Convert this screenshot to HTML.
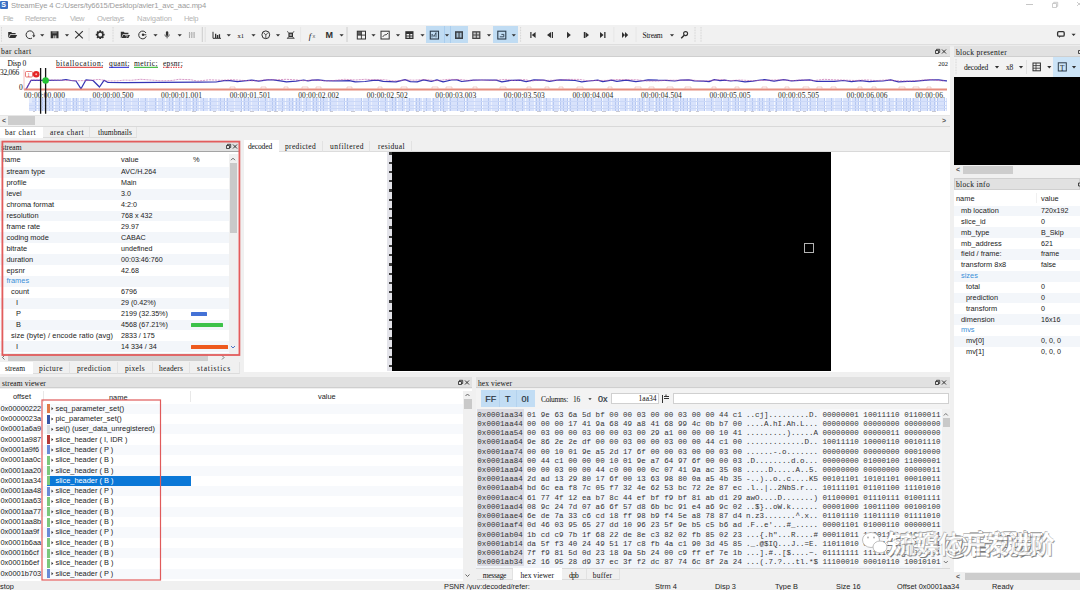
<!DOCTYPE html>
<html>
<head>
<meta charset="utf-8">
<title>StreamEye 4</title>
<style>
html,body{margin:0;padding:0;}
body{width:1080px;height:590px;overflow:hidden;background:#f0f0f0;}
#app{position:relative;width:1080px;height:590px;overflow:hidden;background:#f0f0f0;font-family:"Liberation Sans",sans-serif;}
#app div{position:absolute;box-sizing:border-box;}
.t{position:absolute;white-space:pre;line-height:12px;height:12px;color:#222;}
.s{font-family:"Liberation Sans",sans-serif;font-size:7.4px;}
.p{font-family:"Liberation Serif",serif;font-size:7.5px;color:#101010;margin-top:1px;}
.m{font-family:"Liberation Mono",monospace;font-size:7.5px;color:#333;}
svg{position:absolute;left:0;top:0;}
</style>
</head>
<body>
<div id="app">
<div style="left:0px;top:0px;width:1080px;height:25px;background:#ffffff;"></div>
<div style="left:0px;top:1px;width:8px;height:8px;background:#3b6fc4;border-radius:1px;"></div>
<div style="left:0px;top:25px;width:1080px;height:20px;background:#f1f1f1;border-bottom:1px solid #dedede;"></div>
<div style="left:0px;top:45px;width:1080px;height:2px;background:#ececec;"></div>
<div style="left:0px;top:46px;width:950px;height:11px;background:#e1e1e1;border-bottom:1px solid #cfcfcf;"></div>
<div style="left:0px;top:57px;width:950px;height:58px;background:#ffffff;"></div>
<div style="left:0px;top:115px;width:950px;height:11px;background:#f0f0f0;border-top:1px solid #e6e6e6;"></div>
<div style="left:8px;top:116px;width:27px;height:9px;background:#cdcdcd;"></div>
<div style="left:0px;top:126px;width:950px;height:1px;background:#d9d9d9;"></div>
<div style="left:0px;top:127px;width:43px;height:11px;background:#ffffff;"></div>
<div style="left:43px;top:127px;width:47px;height:11px;background:#f0f0f0;border-right:1px solid #e2e2e2;border-bottom:1px solid #dcdcdc;"></div>
<div style="left:90px;top:127px;width:47px;height:11px;background:#f0f0f0;border-right:1px solid #e2e2e2;border-bottom:1px solid #dcdcdc;"></div>
<div style="left:29px;top:97.8px;width:918px;height:13.2px;background:repeating-linear-gradient(90deg,rgba(255,255,255,0) 0,rgba(255,255,255,0) 7.6px,rgba(255,255,255,0.75) 7.6px,rgba(255,255,255,0.75) 8.57px),repeating-linear-gradient(90deg,#d8e2fb 0,#d8e2fb 2.8px,#b6c8f2 2.8px,#b6c8f2 3.43px);"></div>
<div style="left:29px;top:101px;width:918px;height:0.7px;background:#cbd8f7;"></div>
<div style="left:29px;top:104.5px;width:918px;height:0.7px;background:#cbd8f7;"></div>
<div style="left:29px;top:108px;width:918px;height:0.7px;background:#cbd8f7;"></div>
<div style="left:29px;top:97.5px;width:3px;height:5px;background:#e4ebfb;"></div>
<div style="left:33px;top:111.3px;width:2px;height:0.9px;background:#c9c9d2;"></div>
<div style="left:54px;top:111.3px;width:4px;height:0.9px;background:#c9c9d2;"></div>
<div style="left:64px;top:111.3px;width:3px;height:0.9px;background:#c9c9d2;"></div>
<div style="left:85px;top:111.3px;width:3px;height:0.9px;background:#c9c9d2;"></div>
<div style="left:106px;top:111.3px;width:2px;height:0.9px;background:#c9c9d2;"></div>
<div style="left:127px;top:111.3px;width:2px;height:0.9px;background:#c9c9d2;"></div>
<div style="left:144px;top:111.3px;width:3px;height:0.9px;background:#c9c9d2;"></div>
<div style="left:165px;top:111.3px;width:2px;height:0.9px;background:#c9c9d2;"></div>
<div style="left:175px;top:111.3px;width:4px;height:0.9px;background:#c9c9d2;"></div>
<div style="left:192px;top:111.3px;width:4px;height:0.9px;background:#c9c9d2;"></div>
<div style="left:213px;top:111.3px;width:3px;height:0.9px;background:#c9c9d2;"></div>
<div style="left:230px;top:111.3px;width:4px;height:0.9px;background:#c9c9d2;"></div>
<div style="left:240px;top:111.3px;width:2px;height:0.9px;background:#c9c9d2;"></div>
<div style="left:250px;top:111.3px;width:4px;height:0.9px;background:#c9c9d2;"></div>
<div style="left:267px;top:111.3px;width:4px;height:0.9px;background:#c9c9d2;"></div>
<div style="left:274px;top:111.3px;width:4px;height:0.9px;background:#c9c9d2;"></div>
<div style="left:281px;top:111.3px;width:2px;height:0.9px;background:#c9c9d2;"></div>
<div style="left:302px;top:111.3px;width:2px;height:0.9px;background:#c9c9d2;"></div>
<div style="left:316px;top:111.3px;width:2px;height:0.9px;background:#c9c9d2;"></div>
<div style="left:330px;top:111.3px;width:3px;height:0.9px;background:#c9c9d2;"></div>
<div style="left:351px;top:111.3px;width:4px;height:0.9px;background:#c9c9d2;"></div>
<div style="left:368px;top:111.3px;width:4px;height:0.9px;background:#c9c9d2;"></div>
<div style="left:385px;top:111.3px;width:3px;height:0.9px;background:#c9c9d2;"></div>
<div style="left:406px;top:111.3px;width:3px;height:0.9px;background:#c9c9d2;"></div>
<div style="left:416px;top:111.3px;width:3px;height:0.9px;background:#c9c9d2;"></div>
<div style="left:423px;top:111.3px;width:2px;height:0.9px;background:#c9c9d2;"></div>
<div style="left:433px;top:111.3px;width:3px;height:0.9px;background:#c9c9d2;"></div>
<div style="left:443px;top:111.3px;width:3px;height:0.9px;background:#c9c9d2;"></div>
<div style="left:460px;top:111.3px;width:4px;height:0.9px;background:#c9c9d2;"></div>
<div style="left:474px;top:111.3px;width:3px;height:0.9px;background:#c9c9d2;"></div>
<div style="left:495px;top:111.3px;width:3px;height:0.9px;background:#c9c9d2;"></div>
<div style="left:516px;top:111.3px;width:3px;height:0.9px;background:#c9c9d2;"></div>
<div style="left:537px;top:111.3px;width:4px;height:0.9px;background:#c9c9d2;"></div>
<div style="left:554px;top:111.3px;width:4px;height:0.9px;background:#c9c9d2;"></div>
<div style="left:564px;top:111.3px;width:3px;height:0.9px;background:#c9c9d2;"></div>
<div style="left:571px;top:111.3px;width:3px;height:0.9px;background:#c9c9d2;"></div>
<div style="left:592px;top:111.3px;width:4px;height:0.9px;background:#c9c9d2;"></div>
<div style="left:602px;top:111.3px;width:4px;height:0.9px;background:#c9c9d2;"></div>
<div style="left:616px;top:111.3px;width:4px;height:0.9px;background:#c9c9d2;"></div>
<div style="left:637px;top:111.3px;width:4px;height:0.9px;background:#c9c9d2;"></div>
<div style="left:644px;top:111.3px;width:4px;height:0.9px;background:#c9c9d2;"></div>
<div style="left:654px;top:111.3px;width:4px;height:0.9px;background:#c9c9d2;"></div>
<div style="left:675px;top:111.3px;width:3px;height:0.9px;background:#c9c9d2;"></div>
<div style="left:689px;top:111.3px;width:2px;height:0.9px;background:#c9c9d2;"></div>
<div style="left:696px;top:111.3px;width:3px;height:0.9px;background:#c9c9d2;"></div>
<div style="left:713px;top:111.3px;width:2px;height:0.9px;background:#c9c9d2;"></div>
<div style="left:727px;top:111.3px;width:2px;height:0.9px;background:#c9c9d2;"></div>
<div style="left:744px;top:111.3px;width:2px;height:0.9px;background:#c9c9d2;"></div>
<div style="left:751px;top:111.3px;width:3px;height:0.9px;background:#c9c9d2;"></div>
<div style="left:768px;top:111.3px;width:3px;height:0.9px;background:#c9c9d2;"></div>
<div style="left:775px;top:111.3px;width:2px;height:0.9px;background:#c9c9d2;"></div>
<div style="left:796px;top:111.3px;width:4px;height:0.9px;background:#c9c9d2;"></div>
<div style="left:803px;top:111.3px;width:3px;height:0.9px;background:#c9c9d2;"></div>
<div style="left:824px;top:111.3px;width:3px;height:0.9px;background:#c9c9d2;"></div>
<div style="left:845px;top:111.3px;width:3px;height:0.9px;background:#c9c9d2;"></div>
<div style="left:866px;top:111.3px;width:2px;height:0.9px;background:#c9c9d2;"></div>
<div style="left:873px;top:111.3px;width:3px;height:0.9px;background:#c9c9d2;"></div>
<div style="left:880px;top:111.3px;width:2px;height:0.9px;background:#c9c9d2;"></div>
<div style="left:887px;top:111.3px;width:4px;height:0.9px;background:#c9c9d2;"></div>
<div style="left:908px;top:111.3px;width:2px;height:0.9px;background:#c9c9d2;"></div>
<div style="left:918px;top:111.3px;width:3px;height:0.9px;background:#c9c9d2;"></div>
<div style="left:932px;top:111.3px;width:4px;height:0.9px;background:#c9c9d2;"></div>
<div style="left:954px;top:46px;width:126px;height:11px;background:#e1e1e1;border-bottom:1px solid #cfcfcf;"></div>
<div style="left:954px;top:57px;width:126px;height:20px;background:#f3f3f3;"></div>
<div style="left:1053px;top:57px;width:27px;height:20px;background:#cce4f7;"></div>
<div style="left:954px;top:77px;width:126px;height:88px;background:#000000;"></div>
<div style="left:954px;top:165px;width:126px;height:10px;background:#f0f0f0;"></div>
<div style="left:963px;top:166px;width:50px;height:8px;background:#cdcdcd;"></div>
<div style="left:954px;top:178px;width:126px;height:12px;background:#e1e1e1;border:1px solid #cfcfcf;"></div>
<div style="left:954px;top:190px;width:126px;height:382px;background:#ffffff;"></div>
<div style="left:954px;top:572px;width:126px;height:9px;background:#f0f0f0;"></div>
<div style="left:965px;top:573px;width:115px;height:7px;background:#cdcdcd;"></div>
<div style="left:954px;top:205.6px;width:126px;height:10.9px;background:#f3f6fa;"></div>
<div style="left:954px;top:227.3px;width:126px;height:10.9px;background:#f3f6fa;"></div>
<div style="left:954px;top:249.0px;width:126px;height:10.9px;background:#f3f6fa;"></div>
<div style="left:954px;top:270.8px;width:126px;height:10.9px;background:#f3f6fa;"></div>
<div style="left:954px;top:292.5px;width:126px;height:10.9px;background:#f3f6fa;"></div>
<div style="left:954px;top:314.2px;width:126px;height:10.9px;background:#f3f6fa;"></div>
<div style="left:954px;top:335.9px;width:126px;height:10.9px;background:#f3f6fa;"></div>
<div style="left:1036px;top:193px;width:1px;height:10px;background:#f0f0f0;"></div>
<div style="left:0px;top:141px;width:240px;height:11.5px;background:#e1e1e1;border-bottom:1px solid #a8a8a8;"></div>
<div style="left:0px;top:152px;width:240px;height:201px;background:#ffffff;"></div>
<div style="left:0px;top:166.9px;width:229px;height:10.9px;background:#f3f6fa;"></div>
<div style="left:0px;top:188.7px;width:229px;height:10.9px;background:#f3f6fa;"></div>
<div style="left:0px;top:210.5px;width:229px;height:10.9px;background:#f3f6fa;"></div>
<div style="left:0px;top:232.3px;width:229px;height:10.9px;background:#f3f6fa;"></div>
<div style="left:0px;top:254.1px;width:229px;height:10.9px;background:#f3f6fa;"></div>
<div style="left:0px;top:275.9px;width:229px;height:10.9px;background:#f3f6fa;"></div>
<div style="left:0px;top:297.7px;width:229px;height:10.9px;background:#f3f6fa;"></div>
<div style="left:191px;top:312.4px;width:16px;height:3.6px;background:#4472d6;border-radius:0.5px;"></div>
<div style="left:0px;top:319.5px;width:229px;height:10.9px;background:#f3f6fa;"></div>
<div style="left:191px;top:323.3px;width:32px;height:3.6px;background:#3cc24a;border-radius:0.5px;"></div>
<div style="left:0px;top:341.3px;width:229px;height:10.9px;background:#f3f6fa;"></div>
<div style="left:191px;top:345.1px;width:37px;height:3.6px;background:#ee5a1e;border-radius:0.5px;"></div>
<div style="left:229px;top:154px;width:9px;height:199px;background:#f0f0f0;"></div>
<div style="left:229.5px;top:163px;width:7.5px;height:70px;background:#c9c9c9;"></div>
<div style="left:0px;top:353px;width:240px;height:9px;background:#f0f0f0;"></div>
<div style="left:8px;top:353.5px;width:200px;height:7.5px;background:#cfcfcf;"></div>
<div style="left:0px;top:362px;width:33px;height:12px;background:#ffffff;"></div>
<div style="left:33px;top:362px;width:37px;height:12px;background:#f0f0f0;border-right:1px solid #e2e2e2;border-bottom:1px solid #dcdcdc;"></div>
<div style="left:70px;top:362px;width:48px;height:12px;background:#f0f0f0;border-right:1px solid #e2e2e2;border-bottom:1px solid #dcdcdc;"></div>
<div style="left:118px;top:362px;width:35px;height:12px;background:#f0f0f0;border-right:1px solid #e2e2e2;border-bottom:1px solid #dcdcdc;"></div>
<div style="left:153px;top:362px;width:37px;height:12px;background:#f0f0f0;border-right:1px solid #e2e2e2;border-bottom:1px solid #dcdcdc;"></div>
<div style="left:190px;top:362px;width:50px;height:12px;background:#f0f0f0;border-right:1px solid #e2e2e2;border-bottom:1px solid #dcdcdc;"></div>
<div style="left:3px;top:151.4px;width:236px;height:1px;background:#a4a4a4;"></div>
<div style="left:244px;top:141px;width:706px;height:11px;background:#f0f0f0;border-bottom:1px solid #d9d9d9;"></div>
<div style="left:244px;top:140px;width:35px;height:12px;background:#ffffff;"></div>
<div style="left:279px;top:141px;width:44px;height:11px;background:#f0f0f0;border-right:1px solid #e2e2e2;border-bottom:1px solid #dcdcdc;"></div>
<div style="left:323px;top:141px;width:47px;height:11px;background:#f0f0f0;border-right:1px solid #e2e2e2;border-bottom:1px solid #dcdcdc;"></div>
<div style="left:370px;top:141px;width:42px;height:11px;background:#f0f0f0;border-right:1px solid #e2e2e2;border-bottom:1px solid #dcdcdc;"></div>
<div style="left:244px;top:152px;width:706px;height:220px;background:#ffffff;"></div>
<div style="left:387px;top:152px;width:5px;height:219px;background:#e4e4ea;"></div>
<div style="left:388.5px;top:152.4px;width:3.5px;height:2.2px;background:#3a3a3a;"></div>
<div style="left:388.5px;top:161.7px;width:3.5px;height:2.2px;background:#3a3a3a;"></div>
<div style="left:388.5px;top:170.9px;width:3.5px;height:2.2px;background:#3a3a3a;"></div>
<div style="left:388.5px;top:180.2px;width:3.5px;height:2.2px;background:#3a3a3a;"></div>
<div style="left:388.5px;top:189.4px;width:3.5px;height:2.2px;background:#3a3a3a;"></div>
<div style="left:388.5px;top:198.7px;width:3.5px;height:2.2px;background:#3a3a3a;"></div>
<div style="left:388.5px;top:207.9px;width:3.5px;height:2.2px;background:#3a3a3a;"></div>
<div style="left:388.5px;top:217.2px;width:3.5px;height:2.2px;background:#3a3a3a;"></div>
<div style="left:388.5px;top:226.4px;width:3.5px;height:2.2px;background:#3a3a3a;"></div>
<div style="left:388.5px;top:235.7px;width:3.5px;height:2.2px;background:#3a3a3a;"></div>
<div style="left:388.5px;top:244.9px;width:3.5px;height:2.2px;background:#3a3a3a;"></div>
<div style="left:388.5px;top:254.2px;width:3.5px;height:2.2px;background:#3a3a3a;"></div>
<div style="left:388.5px;top:263.4px;width:3.5px;height:2.2px;background:#3a3a3a;"></div>
<div style="left:388.5px;top:272.6px;width:3.5px;height:2.2px;background:#3a3a3a;"></div>
<div style="left:388.5px;top:281.9px;width:3.5px;height:2.2px;background:#3a3a3a;"></div>
<div style="left:388.5px;top:291.1px;width:3.5px;height:2.2px;background:#3a3a3a;"></div>
<div style="left:388.5px;top:300.4px;width:3.5px;height:2.2px;background:#3a3a3a;"></div>
<div style="left:388.5px;top:309.6px;width:3.5px;height:2.2px;background:#3a3a3a;"></div>
<div style="left:388.5px;top:318.9px;width:3.5px;height:2.2px;background:#3a3a3a;"></div>
<div style="left:388.5px;top:328.1px;width:3.5px;height:2.2px;background:#3a3a3a;"></div>
<div style="left:388.5px;top:337.4px;width:3.5px;height:2.2px;background:#3a3a3a;"></div>
<div style="left:388.5px;top:346.6px;width:3.5px;height:2.2px;background:#3a3a3a;"></div>
<div style="left:388.5px;top:355.9px;width:3.5px;height:2.2px;background:#3a3a3a;"></div>
<div style="left:388.5px;top:365.1px;width:3.5px;height:2.2px;background:#3a3a3a;"></div>
<div style="left:392px;top:152px;width:439px;height:219px;background:#000000;"></div>
<div style="left:803.5px;top:243px;width:10px;height:10px;border:1px solid #b4b4b4;"></div>
<div style="left:0px;top:377px;width:472px;height:11px;background:#e1e1e1;border-bottom:1px solid #cfcfcf;"></div>
<div style="left:0px;top:389px;width:472px;height:192px;background:#ffffff;"></div>
<div style="left:463px;top:391px;width:9px;height:190px;background:#f0f0f0;"></div>
<div style="left:463.5px;top:399px;width:8px;height:10px;background:#c9c9c9;"></div>
<div style="left:43px;top:391px;width:1px;height:11px;background:#e8e8e8;"></div>
<div style="left:190px;top:391px;width:1px;height:11px;background:#e8e8e8;"></div>
<div style="left:0px;top:403.6px;width:463px;height:10.3px;background:#f7f9fc;"></div>
<div style="left:47px;top:404.2px;width:3px;height:9px;background:#e07a48;"></div>
<div style="left:47px;top:414.5px;width:3px;height:9px;background:#3656a8;"></div>
<div style="left:0px;top:424.2px;width:463px;height:10.3px;background:#f7f9fc;"></div>
<div style="left:47px;top:424.8px;width:3px;height:9px;background:#d8dce0;"></div>
<div style="left:47px;top:435.1px;width:3px;height:9px;background:#b63a3a;"></div>
<div style="left:0px;top:444.8px;width:463px;height:10.3px;background:#f7f9fc;"></div>
<div style="left:47px;top:445.4px;width:3px;height:9px;background:#6a8ad8;"></div>
<div style="left:47px;top:455.8px;width:3px;height:9px;background:#7cc87c;"></div>
<div style="left:0px;top:465.5px;width:463px;height:10.3px;background:#f7f9fc;"></div>
<div style="left:47px;top:466.1px;width:3px;height:9px;background:#7cc87c;"></div>
<div style="left:47px;top:475.9px;width:143.5px;height:10px;background:#0b78d7;"></div>
<div style="left:47px;top:476.4px;width:3px;height:9px;background:#7cc87c;"></div>
<div style="left:0px;top:486.1px;width:463px;height:10.3px;background:#f7f9fc;"></div>
<div style="left:47px;top:486.7px;width:3px;height:9px;background:#6a8ad8;"></div>
<div style="left:47px;top:497.0px;width:3px;height:9px;background:#7cc87c;"></div>
<div style="left:0px;top:506.7px;width:463px;height:10.3px;background:#f7f9fc;"></div>
<div style="left:47px;top:507.3px;width:3px;height:9px;background:#7cc87c;"></div>
<div style="left:47px;top:517.6px;width:3px;height:9px;background:#7cc87c;"></div>
<div style="left:0px;top:527.3px;width:463px;height:10.3px;background:#f7f9fc;"></div>
<div style="left:47px;top:527.9px;width:3px;height:9px;background:#6a8ad8;"></div>
<div style="left:47px;top:538.2px;width:3px;height:9px;background:#7cc87c;"></div>
<div style="left:0px;top:547.9px;width:463px;height:10.3px;background:#f7f9fc;"></div>
<div style="left:47px;top:548.5px;width:3px;height:9px;background:#7cc87c;"></div>
<div style="left:47px;top:558.9px;width:3px;height:9px;background:#7cc87c;"></div>
<div style="left:0px;top:568.6px;width:463px;height:10.3px;background:#f7f9fc;"></div>
<div style="left:47px;top:569.2px;width:3px;height:9px;background:#6a8ad8;"></div>
<div style="left:476px;top:377px;width:474px;height:11px;background:#e1e1e1;border-bottom:1px solid #cfcfcf;"></div>
<div style="left:476px;top:389px;width:474px;height:21px;background:#f3f3f3;"></div>
<div style="left:480.5px;top:389.5px;width:54.5px;height:17px;background:#c2ddf4;"></div>
<div style="left:498.5px;top:389.5px;width:1px;height:17px;background:#b3d2ee;"></div>
<div style="left:516px;top:389.5px;width:1px;height:17px;background:#b3d2ee;"></div>
<div style="left:611px;top:392.5px;width:48px;height:11.5px;background:#ffffff;border:1px solid #d0d0d0;"></div>
<div style="left:673px;top:392.5px;width:275.5px;height:11.5px;background:#ffffff;border:1px solid #d0d0d0;"></div>
<div style="left:476px;top:409px;width:474px;height:159px;background:#f1f4f9;"></div>
<div style="left:477px;top:409px;width:46.5px;height:157px;background:#dbdbe2;"></div>
<div style="left:820px;top:409px;width:122px;height:157px;background:#f7f8fa;"></div>
<div style="left:942px;top:409px;width:8px;height:159px;background:#f0f0f0;"></div>
<div style="left:942.5px;top:418px;width:7px;height:9px;background:#c9c9c9;"></div>
<div style="left:476px;top:568px;width:474px;height:1px;background:#d9d9d9;"></div>
<div style="left:477px;top:569px;width:36px;height:11px;background:#f0f0f0;border-right:1px solid #e2e2e2;border-bottom:1px solid #dcdcdc;"></div>
<div style="left:513px;top:568px;width:49px;height:12px;background:#ffffff;"></div>
<div style="left:562px;top:569px;width:25px;height:11px;background:#f0f0f0;border-right:1px solid #e2e2e2;border-bottom:1px solid #dcdcdc;"></div>
<div style="left:587px;top:569px;width:33px;height:11px;background:#f0f0f0;border-right:1px solid #e2e2e2;border-bottom:1px solid #dcdcdc;"></div>
<div style="left:426.3px;top:26px;width:41.3px;height:16.5px;background:#c0dcf3;"></div>
<div style="left:444.3px;top:26px;width:0.8px;height:16.5px;background:#a9cdee;"></div>
<div style="left:450.4px;top:26px;width:0.8px;height:16.5px;background:#a9cdee;"></div>
<div style="left:492.8px;top:26px;width:25px;height:16.5px;background:#c0dcf3;"></div>
<div style="left:0px;top:582px;width:1080px;height:8px;background:#f0f0f0;"></div>
<span class="t s" style="left:11px;top:-0.5px;color:#9c9c9c;font-size:7.6px;letter-spacing:-0.141px;">StreamEye 4 C:/Users/ty6615/Desktop/avier1_avc_aac.mp4</span>
<span class="t s" style="left:3px;top:12.5px;color:#b4b4b4;font-size:7.6px;letter-spacing:-0.562px;">File</span>
<span class="t s" style="left:25px;top:12.5px;color:#b4b4b4;font-size:7.6px;letter-spacing:-0.450px;">Reference</span>
<span class="t s" style="left:70px;top:12.5px;color:#b4b4b4;font-size:7.6px;letter-spacing:-0.582px;">View</span>
<span class="t s" style="left:97px;top:12.5px;color:#b4b4b4;font-size:7.6px;letter-spacing:-0.371px;">Overlays</span>
<span class="t s" style="left:137px;top:12.5px;color:#b4b4b4;font-size:7.6px;letter-spacing:-0.089px;">Navigation</span>
<span class="t s" style="left:184px;top:12.5px;color:#b4b4b4;font-size:7.6px;letter-spacing:-0.406px;">Help</span>
<span class="t s" style="left:1.3px;top:-1.0px;color:#fff;font-size:7px;font-weight:bold;">S</span>
<span class="t p" style="left:1px;top:45.3px;letter-spacing:0.450px;">bar chart</span>
<span class="t s" style="left:2px;top:114.5px;color:#555;font-size:7px;font-weight:bold;">&lt;</span>
<span class="t s" style="left:942px;top:114.5px;color:#555;font-size:7px;font-weight:bold;">&gt;</span>
<span class="t p" style="left:5px;top:126.0px;letter-spacing:0.505px;">bar chart</span>
<span class="t p" style="left:50px;top:126.0px;letter-spacing:0.464px;">area chart</span>
<span class="t p" style="left:98px;top:126.0px;letter-spacing:0.066px;">thumbnails</span>
<span class="t p" style="left:7.5px;top:57.3px;letter-spacing:-0.216px;">Disp 0</span>
<span class="t p" style="left:56px;top:57.3px;letter-spacing:0.602px;">bitallocation;</span>
<span class="t p" style="left:109px;top:57.3px;letter-spacing:0.375px;">quant;</span>
<span class="t p" style="left:134px;top:57.3px;letter-spacing:0.393px;">metric;</span>
<span class="t p" style="left:163px;top:57.3px;letter-spacing:0.276px;">epsnr;</span>
<span class="t p" style="left:0px;top:66.0px;letter-spacing:-0.271px;">32,066</span>
<span class="t p" style="left:19px;top:81.0px;">0</span>
<span class="t p" style="right:132px;top:57.0px;font-size:6.5px;">202</span>
<span class="t p" style="left:24.0px;top:89.0px;color:#2a2a2a;letter-spacing:0.100px;">00:00:00.000</span>
<span class="t p" style="left:92.55px;top:89.0px;color:#2a2a2a;letter-spacing:0.100px;">00:00:00.500</span>
<span class="t p" style="left:161.1px;top:89.0px;color:#2a2a2a;letter-spacing:0.100px;">00:00:01.001</span>
<span class="t p" style="left:229.64999999999998px;top:89.0px;color:#2a2a2a;letter-spacing:0.100px;">00:00:01.501</span>
<span class="t p" style="left:298.2px;top:89.0px;color:#2a2a2a;letter-spacing:0.100px;">00:00:02.002</span>
<span class="t p" style="left:366.75px;top:89.0px;color:#2a2a2a;letter-spacing:0.100px;">00:00:02.502</span>
<span class="t p" style="left:435.29999999999995px;top:89.0px;color:#2a2a2a;letter-spacing:0.100px;">00:00:03.003</span>
<span class="t p" style="left:503.84999999999997px;top:89.0px;color:#2a2a2a;letter-spacing:0.100px;">00:00:03.503</span>
<span class="t p" style="left:572.4px;top:89.0px;color:#2a2a2a;letter-spacing:0.100px;">00:00:04.004</span>
<span class="t p" style="left:640.9499999999999px;top:89.0px;color:#2a2a2a;letter-spacing:0.100px;">00:00:04.504</span>
<span class="t p" style="left:709.5px;top:89.0px;color:#2a2a2a;letter-spacing:0.100px;">00:00:05.005</span>
<span class="t p" style="left:778.05px;top:89.0px;color:#2a2a2a;letter-spacing:0.100px;">00:00:05.505</span>
<span class="t p" style="left:846.5999999999999px;top:89.0px;color:#2a2a2a;letter-spacing:0.100px;">00:00:06.006</span>
<span class="t p" style="left:915.15px;top:89.0px;color:#2a2a2a;letter-spacing:0.161px;">00:00:06.</span>
<span class="t p" style="left:27.3px;top:68.3px;color:#e04040;font-size:5.5px;">1</span>
<span class="t p" style="left:956px;top:45.5px;letter-spacing:0.331px;">block presenter</span>
<span class="t p" style="left:964px;top:61.0px;letter-spacing:-0.143px;">decoded</span>
<span class="t p" style="left:1006px;top:61.0px;letter-spacing:-0.250px;">x8</span>
<span class="t s" style="left:956px;top:164.0px;color:#555;font-size:7px;font-weight:bold;">&lt;</span>
<span class="t p" style="left:956px;top:178.0px;letter-spacing:0.338px;">block info</span>
<span class="t s" style="left:956px;top:570.5px;color:#555;font-size:7px;font-weight:bold;">&lt;</span>
<span class="t s" style="left:956px;top:192.5px;">name</span>
<span class="t s" style="left:1041px;top:192.5px;font-size:7.4px;">value</span>
<span class="t s" style="left:961px;top:205.0px;">mb location</span>
<span class="t s" style="left:1041px;top:205.0px;font-size:7.15px;">720x192</span>
<span class="t s" style="left:961px;top:215.86px;">slice_id</span>
<span class="t s" style="left:1041px;top:215.86px;font-size:7.15px;">0</span>
<span class="t s" style="left:961px;top:226.72px;">mb_type</span>
<span class="t s" style="left:1041px;top:226.72px;font-size:7.15px;">B_Skip</span>
<span class="t s" style="left:961px;top:237.57999999999998px;">mb_address</span>
<span class="t s" style="left:1041px;top:237.57999999999998px;font-size:7.15px;">621</span>
<span class="t s" style="left:961px;top:248.44px;">field / frame:</span>
<span class="t s" style="left:1041px;top:248.44px;font-size:7.15px;">frame</span>
<span class="t s" style="left:961px;top:259.3px;">transform 8x8</span>
<span class="t s" style="left:1041px;top:259.3px;font-size:7.15px;">false</span>
<span class="t s" style="left:961px;top:270.15999999999997px;color:#3a8fd8;">sizes</span>
<span class="t s" style="left:966px;top:281.02px;">total</span>
<span class="t s" style="left:1041px;top:281.02px;font-size:7.15px;">0</span>
<span class="t s" style="left:966px;top:291.88px;">prediction</span>
<span class="t s" style="left:1041px;top:291.88px;font-size:7.15px;">0</span>
<span class="t s" style="left:966px;top:302.74px;">transform</span>
<span class="t s" style="left:1041px;top:302.74px;font-size:7.15px;">0</span>
<span class="t s" style="left:961px;top:313.6px;">dimension</span>
<span class="t s" style="left:1041px;top:313.6px;font-size:7.15px;">16x16</span>
<span class="t s" style="left:961px;top:324.46px;color:#3a8fd8;">mvs</span>
<span class="t s" style="left:966px;top:335.32px;">mv[0]</span>
<span class="t s" style="left:1041px;top:335.32px;font-size:7.15px;">0, 0, 0</span>
<span class="t s" style="left:966px;top:346.18px;">mv[1]</span>
<span class="t s" style="left:1041px;top:346.18px;font-size:7.15px;">0, 0, 0</span>
<span class="t p" style="left:1.5px;top:140.5px;letter-spacing:0.000px;">stream</span>
<span class="t s" style="left:2px;top:154.1px;">name</span>
<span class="t s" style="left:121px;top:154.1px;font-size:7.4px;">value</span>
<span class="t s" style="left:193px;top:154.1px;">%</span>
<span class="t s" style="left:6.5px;top:166.4px;">stream type</span>
<span class="t s" style="left:121px;top:166.4px;font-size:7.15px;">AVC/H.264</span>
<span class="t s" style="left:6.5px;top:177.3px;">profile</span>
<span class="t s" style="left:121px;top:177.3px;font-size:7.15px;">Main</span>
<span class="t s" style="left:6.5px;top:188.20000000000002px;">level</span>
<span class="t s" style="left:121px;top:188.20000000000002px;font-size:7.15px;">3.0</span>
<span class="t s" style="left:6.5px;top:199.10000000000002px;">chroma format</span>
<span class="t s" style="left:121px;top:199.10000000000002px;font-size:7.15px;">4:2:0</span>
<span class="t s" style="left:6.5px;top:210.0px;">resolution</span>
<span class="t s" style="left:121px;top:210.0px;font-size:7.15px;">768 x 432</span>
<span class="t s" style="left:6.5px;top:220.9px;">frame rate</span>
<span class="t s" style="left:121px;top:220.9px;font-size:7.15px;">29.97</span>
<span class="t s" style="left:6.5px;top:231.8px;">coding mode</span>
<span class="t s" style="left:121px;top:231.8px;font-size:7.15px;">CABAC</span>
<span class="t s" style="left:6.5px;top:242.7px;">bitrate</span>
<span class="t s" style="left:121px;top:242.7px;font-size:7.15px;">undefined</span>
<span class="t s" style="left:6.5px;top:253.60000000000002px;">duration</span>
<span class="t s" style="left:121px;top:253.60000000000002px;font-size:7.15px;">00:03:46:760</span>
<span class="t s" style="left:6.5px;top:264.5px;">epsnr</span>
<span class="t s" style="left:121px;top:264.5px;font-size:7.15px;">42.68</span>
<span class="t s" style="left:6.5px;top:275.4px;color:#3a8fd8;">frames</span>
<span class="t s" style="left:11px;top:286.3px;">count</span>
<span class="t s" style="left:121px;top:286.3px;font-size:7.15px;">6796</span>
<span class="t s" style="left:16px;top:297.20000000000005px;">I</span>
<span class="t s" style="left:121px;top:297.20000000000005px;font-size:7.15px;">29 (0.42%)</span>
<span class="t s" style="left:16px;top:308.1px;">P</span>
<span class="t s" style="left:121px;top:308.1px;font-size:7.15px;">2199 (32.35%)</span>
<span class="t s" style="left:16px;top:319.0px;">B</span>
<span class="t s" style="left:121px;top:319.0px;font-size:7.15px;">4568 (67.21%)</span>
<span class="t s" style="left:11px;top:329.9px;letter-spacing:0.068px;">size (byte) / encode ratio (avg)</span>
<span class="t s" style="left:121px;top:329.9px;font-size:7.15px;">2833 / 175</span>
<span class="t s" style="left:16px;top:340.8px;">I</span>
<span class="t s" style="left:121px;top:340.8px;font-size:7.15px;">14 334 / 34</span>
<span class="t p" style="left:5px;top:362.0px;letter-spacing:0.000px;">stream</span>
<span class="t p" style="left:39px;top:362.0px;letter-spacing:0.453px;">picture</span>
<span class="t p" style="left:77px;top:362.0px;letter-spacing:0.358px;">prediction</span>
<span class="t p" style="left:125px;top:362.0px;letter-spacing:0.346px;">pixels</span>
<span class="t p" style="left:159px;top:362.0px;letter-spacing:0.156px;">headers</span>
<span class="t p" style="left:197px;top:362.0px;letter-spacing:0.816px;">statistics</span>
<span class="t p" style="left:248px;top:139.8px;letter-spacing:-0.143px;">decoded</span>
<span class="t p" style="left:285px;top:139.8px;letter-spacing:0.344px;">predicted</span>
<span class="t p" style="left:330px;top:139.8px;letter-spacing:0.484px;">unfiltered</span>
<span class="t p" style="left:378px;top:139.8px;letter-spacing:0.406px;">residual</span>
<span class="t p" style="left:2px;top:376.5px;letter-spacing:0.132px;">stream viewer</span>
<span class="t s" style="left:13px;top:391.0px;">offset</span>
<span class="t s" style="left:109px;top:391.5px;">name</span>
<span class="t s" style="left:318px;top:391.0px;">value</span>
<span class="t s" style="left:0.5px;top:402.7px;">0x00000222</span>
<span class="t s" style="left:55.5px;top:402.7px;">seq_parameter_set()</span>
<span class="t s" style="left:0.5px;top:413.01px;">0x0000023a</span>
<span class="t s" style="left:55.5px;top:413.01px;">pic_parameter_set()</span>
<span class="t s" style="left:0.5px;top:423.32px;">0x0001a6a9</span>
<span class="t s" style="left:55.5px;top:423.32px;">sei() (user_data_unregistered)</span>
<span class="t s" style="left:0.5px;top:433.63px;">0x0001a987</span>
<span class="t s" style="left:55.5px;top:433.63px;">slice_header ( I, IDR )</span>
<span class="t s" style="left:0.5px;top:443.94px;">0x0001a9f6</span>
<span class="t s" style="left:55.5px;top:443.94px;">slice_header ( P )</span>
<span class="t s" style="left:0.5px;top:454.25px;">0x0001aa0c</span>
<span class="t s" style="left:55.5px;top:454.25px;">slice_header ( B )</span>
<span class="t s" style="left:0.5px;top:464.56px;">0x0001aa20</span>
<span class="t s" style="left:55.5px;top:464.56px;">slice_header ( B )</span>
<span class="t s" style="left:0.5px;top:474.87px;">0x0001aa34</span>
<span class="t s" style="left:55.5px;top:474.87px;color:#ffffff;">slice_header ( B )</span>
<span class="t s" style="left:0.5px;top:485.18px;">0x0001aa48</span>
<span class="t s" style="left:55.5px;top:485.18px;">slice_header ( P )</span>
<span class="t s" style="left:0.5px;top:495.49px;">0x0001aa63</span>
<span class="t s" style="left:55.5px;top:495.49px;">slice_header ( B )</span>
<span class="t s" style="left:0.5px;top:505.8px;">0x0001aa77</span>
<span class="t s" style="left:55.5px;top:505.8px;">slice_header ( B )</span>
<span class="t s" style="left:0.5px;top:516.11px;">0x0001aa8b</span>
<span class="t s" style="left:55.5px;top:516.11px;">slice_header ( B )</span>
<span class="t s" style="left:0.5px;top:526.42px;">0x0001aa9f</span>
<span class="t s" style="left:55.5px;top:526.42px;">slice_header ( P )</span>
<span class="t s" style="left:0.5px;top:536.73px;">0x0001b6aa</span>
<span class="t s" style="left:55.5px;top:536.73px;">slice_header ( B )</span>
<span class="t s" style="left:0.5px;top:547.04px;">0x0001b6cf</span>
<span class="t s" style="left:55.5px;top:547.04px;">slice_header ( B )</span>
<span class="t s" style="left:0.5px;top:557.35px;">0x0001b6ef</span>
<span class="t s" style="left:55.5px;top:557.35px;">slice_header ( B )</span>
<span class="t s" style="left:0.5px;top:567.66px;">0x0001b703</span>
<span class="t s" style="left:55.5px;top:567.66px;">slice_header ( P )</span>
<span class="t p" style="left:478px;top:376.5px;letter-spacing:0.089px;">hex viewer</span>
<span class="t s" style="left:485.3px;top:393.0px;color:#2a3440;font-size:9px;-webkit-text-stroke:0.2px #2a3440;">FF</span>
<span class="t s" style="left:505px;top:393.0px;color:#2a3440;font-size:9px;-webkit-text-stroke:0.2px #2a3440;">T</span>
<span class="t s" style="left:521.5px;top:393.0px;color:#2a3440;font-size:9px;-webkit-text-stroke:0.2px #2a3440;">0I</span>
<span class="t p" style="left:541px;top:393.0px;letter-spacing:-0.273px;">Columns:</span>
<span class="t p" style="left:573px;top:393.0px;letter-spacing:-0.250px;">16</span>
<span class="t s" style="left:598px;top:393.3px;color:#2a3440;font-size:9px;-webkit-text-stroke:0.2px #2a3440;">0x</span>
<span class="t p" style="right:423.5px;top:392.3px;font-size:7.5px;">1aa34</span>
<span class="t m" style="left:477.3px;top:408.6px;letter-spacing:0.048px;">0x0001aa34</span>
<span class="t m" style="left:527px;top:408.6px;letter-spacing:0.073px;">01 9e 63 6a 5d bf 00 00 03 00 00 03 00 00 44 c1</span>
<span class="t m" style="left:746px;top:408.6px;letter-spacing:-0.001px;">..cj].........D.</span>
<span class="t m" style="left:822.5px;top:408.6px;letter-spacing:0.037px;">00000001 10011110 01100011</span>
<span class="t m" style="left:477.3px;top:417.83500000000004px;letter-spacing:0.048px;">0x0001aa44</span>
<span class="t m" style="left:527px;top:417.83500000000004px;letter-spacing:0.073px;">00 00 00 17 41 9a 68 49 a8 41 68 99 4c 0b b7 00</span>
<span class="t m" style="left:746px;top:417.83500000000004px;letter-spacing:-0.001px;">....A.hI.Ah.L...</span>
<span class="t m" style="left:822.5px;top:417.83500000000004px;letter-spacing:0.037px;">00000000 00000000 00000000</span>
<span class="t m" style="left:477.3px;top:427.07000000000005px;letter-spacing:0.048px;">0x0001aa54</span>
<span class="t m" style="left:527px;top:427.07000000000005px;letter-spacing:0.073px;">00 03 00 00 03 00 00 03 00 29 a1 00 00 00 10 41</span>
<span class="t m" style="left:746px;top:427.07000000000005px;letter-spacing:-0.001px;">.........).....A</span>
<span class="t m" style="left:822.5px;top:427.07000000000005px;letter-spacing:0.037px;">00000000 00000011 00000000</span>
<span class="t m" style="left:477.3px;top:436.305px;letter-spacing:0.048px;">0x0001aa64</span>
<span class="t m" style="left:527px;top:436.305px;letter-spacing:0.073px;">9e 86 2e 2e df 00 00 03 00 00 03 00 00 44 c1 00</span>
<span class="t m" style="left:746px;top:436.305px;letter-spacing:-0.001px;">.............D..</span>
<span class="t m" style="left:822.5px;top:436.305px;letter-spacing:0.037px;">10011110 10000110 00101110</span>
<span class="t m" style="left:477.3px;top:445.54px;letter-spacing:0.048px;">0x0001aa74</span>
<span class="t m" style="left:527px;top:445.54px;letter-spacing:0.073px;">00 00 10 01 9e a5 2d 17 6f 00 00 03 00 00 03 00</span>
<span class="t m" style="left:746px;top:445.54px;letter-spacing:-0.001px;">......-.o.......</span>
<span class="t m" style="left:822.5px;top:445.54px;letter-spacing:0.037px;">00000000 00000000 00010000</span>
<span class="t m" style="left:477.3px;top:454.77500000000003px;letter-spacing:0.048px;">0x0001aa84</span>
<span class="t m" style="left:527px;top:454.77500000000003px;letter-spacing:0.073px;">00 44 c1 00 00 00 10 01 9e a7 64 97 6f 00 00 03</span>
<span class="t m" style="left:746px;top:454.77500000000003px;letter-spacing:-0.001px;">.D........d.o...</span>
<span class="t m" style="left:822.5px;top:454.77500000000003px;letter-spacing:0.037px;">00000000 01000100 11000001</span>
<span class="t m" style="left:477.3px;top:464.01px;letter-spacing:0.048px;">0x0001aa94</span>
<span class="t m" style="left:527px;top:464.01px;letter-spacing:0.073px;">00 00 03 00 00 44 c0 00 00 0c 07 41 9a ac 35 08</span>
<span class="t m" style="left:746px;top:464.01px;letter-spacing:-0.001px;">.....D.....A..5.</span>
<span class="t m" style="left:822.5px;top:464.01px;letter-spacing:0.037px;">00000000 00000000 00000011</span>
<span class="t m" style="left:477.3px;top:473.245px;letter-spacing:0.048px;">0x0001aaa4</span>
<span class="t m" style="left:527px;top:473.245px;letter-spacing:0.073px;">2d ad 13 29 80 17 6f 00 13 63 98 80 0a a5 4b 35</span>
<span class="t m" style="left:746px;top:473.245px;letter-spacing:-0.001px;">-..)..o..c....K5</span>
<span class="t m" style="left:822.5px;top:473.245px;letter-spacing:0.037px;">00101101 10101101 00010011</span>
<span class="t m" style="left:477.3px;top:482.48px;letter-spacing:0.048px;">0x0001aab4</span>
<span class="t m" style="left:527px;top:482.48px;letter-spacing:0.073px;">bd 6c ea f8 7c 05 f7 32 4e 62 53 bc 72 2e 87 ec</span>
<span class="t m" style="left:746px;top:482.48px;letter-spacing:-0.001px;">.l..|..2NbS.r...</span>
<span class="t m" style="left:822.5px;top:482.48px;letter-spacing:0.037px;">10111101 01101100 11101010</span>
<span class="t m" style="left:477.3px;top:491.71500000000003px;letter-spacing:0.048px;">0x0001aac4</span>
<span class="t m" style="left:527px;top:491.71500000000003px;letter-spacing:0.073px;">61 77 4f 12 ea b7 8c 44 ef bf f9 bf 81 ab d1 29</span>
<span class="t m" style="left:746px;top:491.71500000000003px;letter-spacing:-0.001px;">awO....D.......)</span>
<span class="t m" style="left:822.5px;top:491.71500000000003px;letter-spacing:0.037px;">01100001 01110111 01001111</span>
<span class="t m" style="left:477.3px;top:500.95000000000005px;letter-spacing:0.048px;">0x0001aad4</span>
<span class="t m" style="left:527px;top:500.95000000000005px;letter-spacing:0.073px;">08 9c 24 7d 07 a6 6f 57 d8 6b bc 91 e4 a6 9c 02</span>
<span class="t m" style="left:746px;top:500.95000000000005px;letter-spacing:-0.001px;">..$}..oW.k......</span>
<span class="t m" style="left:822.5px;top:500.95000000000005px;letter-spacing:0.037px;">00001000 10011100 00100100</span>
<span class="t m" style="left:477.3px;top:510.18500000000006px;letter-spacing:0.048px;">0x0001aae4</span>
<span class="t m" style="left:527px;top:510.18500000000006px;letter-spacing:0.073px;">6e de 7a 33 c6 cd 18 ff 98 b9 f4 5e a8 78 87 d4</span>
<span class="t m" style="left:746px;top:510.18500000000006px;letter-spacing:-0.001px;">n.z3.......^.x..</span>
<span class="t m" style="left:822.5px;top:510.18500000000006px;letter-spacing:0.037px;">01101110 11011110 01111010</span>
<span class="t m" style="left:477.3px;top:519.4200000000001px;letter-spacing:0.048px;">0x0001aaf4</span>
<span class="t m" style="left:527px;top:519.4200000000001px;letter-spacing:0.073px;">0d 46 03 95 65 27 dd 10 96 23 5f 9e b5 c5 b6 ad</span>
<span class="t m" style="left:746px;top:519.4200000000001px;letter-spacing:-0.001px;">.F..e'...#_.....</span>
<span class="t m" style="left:822.5px;top:519.4200000000001px;letter-spacing:0.037px;">00001101 01000110 00000011</span>
<span class="t m" style="left:477.3px;top:528.655px;letter-spacing:0.048px;">0x0001ab04</span>
<span class="t m" style="left:527px;top:528.655px;letter-spacing:0.073px;">1b cd c9 7b 1f 68 22 de 8e c3 82 02 fb 85 02 23</span>
<span class="t m" style="left:746px;top:528.655px;letter-spacing:-0.001px;">...{.h"...R....#</span>
<span class="t m" style="left:822.5px;top:528.655px;letter-spacing:0.037px;">00011011 11001101 11001001</span>
<span class="t m" style="left:477.3px;top:537.89px;letter-spacing:0.048px;">0x0001ab14</span>
<span class="t m" style="left:527px;top:537.89px;letter-spacing:0.073px;">da 5f f3 40 24 49 51 17 c8 fb 4a c1 90 3d 45 85</span>
<span class="t m" style="left:746px;top:537.89px;letter-spacing:-0.001px;">._.@$IQ...J..=E.</span>
<span class="t m" style="left:822.5px;top:537.89px;letter-spacing:0.037px;">11011010 01011111 11110011</span>
<span class="t m" style="left:477.3px;top:547.125px;letter-spacing:0.048px;">0x0001ab24</span>
<span class="t m" style="left:527px;top:547.125px;letter-spacing:0.073px;">7f f9 81 5d 0d 23 18 9a 5b 24 00 c9 ff ef 7e 1b</span>
<span class="t m" style="left:746px;top:547.125px;letter-spacing:-0.001px;">...].#..[$....~.</span>
<span class="t m" style="left:822.5px;top:547.125px;letter-spacing:0.037px;">01111111 11111001 10000001</span>
<span class="t m" style="left:477.3px;top:556.36px;letter-spacing:0.048px;">0x0001ab34</span>
<span class="t m" style="left:527px;top:556.36px;letter-spacing:0.073px;">e2 16 95 28 d9 37 ec 3f f2 dc 87 74 6c 8f 2a 24</span>
<span class="t m" style="left:746px;top:556.36px;letter-spacing:-0.001px;">...(.7.?...tl.*$</span>
<span class="t m" style="left:822.5px;top:556.36px;letter-spacing:0.037px;">11100010 00010110 10010101</span>
<span class="t p" style="left:482.7px;top:568.5px;letter-spacing:-0.275px;">message</span>
<span class="t p" style="left:520.5px;top:568.5px;letter-spacing:0.039px;">hex viewer</span>
<span class="t p" style="left:569px;top:568.5px;letter-spacing:-0.750px;">dpb</span>
<span class="t p" style="left:592.7px;top:568.5px;letter-spacing:0.219px;">buffer</span>
<span class="t p" style="left:237.6px;top:29.0px;font-size:6.5px;letter-spacing:0.000px;">x1</span>
<span class="t p" style="left:308.8px;top:28.799999999999997px;font-size:8.5px;font-style:italic;">f</span>
<span class="t s" style="left:312.6px;top:30.0px;color:#555;font-size:5.5px;">x</span>
<span class="t s" style="left:325.4px;top:29.0px;color:#303030;font-size:9px;font-weight:bold;">M</span>
<span class="t p" style="left:642.5px;top:29.0px;letter-spacing:-0.208px;">Stream</span>
<span class="t p" style="left:1060.1px;top:61.599999999999994px;font-size:7.2px;">T</span>
<span class="t s" style="left:0px;top:581.0px;">stop</span>
<span class="t s" style="left:444px;top:581.0px;">PSNR /yuv:decoded/refer:</span>
<span class="t s" style="left:655px;top:581.0px;">Strm 4</span>
<span class="t s" style="left:715px;top:581.0px;">Disp 3</span>
<span class="t s" style="left:775px;top:581.0px;">Type B</span>
<span class="t s" style="left:836px;top:581.0px;">Size 16</span>
<span class="t s" style="left:897px;top:581.0px;">Offset 0x0001aa34</span>
<span class="t s" style="left:992px;top:581.0px;">Ready</span>
<span class="t s" style="left:887px;top:539.0px;color:#ffffff;font-size:26px;font-family:'Liberation Sans','Noto Sans CJK SC',sans-serif;font-weight:bold;line-height:34px;height:34px;margin-top:-11px;letter-spacing:-1px;text-shadow:1px 1px 0.5px #7a7a7a,-0.6px -0.6px 0.5px #a0a0a0,1px -0.5px 0.5px #999;">知乎 @音视频</span>
<span class="t s" style="left:893px;top:539.0px;color:#ffffff;font-size:23.5px;font-family:'Liberation Sans','Noto Sans CJK SC',sans-serif;font-weight:bold;line-height:34px;height:34px;margin-top:-11px;letter-spacing:-0.5px;opacity:0.75;text-shadow:1px 1px 0.5px #808080,-0.6px -0.6px 0.5px #a8a8a8;">流媒体开发进阶</span>
<svg width="1080" height="590" viewBox="0 0 1080 590"><path d="M1026 4.5h7" stroke="#b8b8b8" stroke-width="0.8" fill="none"/>
<path d="M1052.5 3.5h4v4h-4z M1053.7 3.5v-1.2h4v4h-1.2" stroke="#b8b8b8" stroke-width="0.7" fill="none"/>
<path d="M1077 2l4 4M1081 2l-4 4" stroke="#b8b8b8" stroke-width="0.7" fill="none"/>
<path d="M56 67.3h47" stroke="#e03030" stroke-width="1"/>
<path d="M109 67.3h20" stroke="#2020d0" stroke-width="1"/>
<path d="M134 67.3h24" stroke="#20b020" stroke-width="1"/>
<path d="M163 67.3h19" stroke="#e03030" stroke-width="1" stroke-dasharray="1.5 1"/>
<polyline points="26.0,89.5 31.0,80.3 40.0,80.3 45.0,80.3 62.0,80.2 66.0,79.5 71.0,80.5 76.0,81.0 81.0,88.8 86.0,79.8 93.0,80.5 99.5,87.0 104.0,80.3 108.0,82.5 125.0,82.6 160.0,82.3 200.0,82.2 216.0,82.0 224.0,80.6 230.0,80.7 237.3,81.7 244.1,80.8 251.6,80.1 258.7,81.1 267.3,79.9 273.2,79.9 282.0,81.2 286.4,81.9 296.0,81.1 303.7,80.0 307.9,80.9 312.5,80.1 318.0,79.8 324.8,80.7 333.7,80.8 341.5,80.8 349.4,80.7 355.2,81.9 365.0,81.5 373.1,80.4 378.6,80.3 383.2,81.4 389.7,81.6 396.0,81.8 405.0,79.7 410.3,81.7 417.2,81.9 423.6,79.9 431.3,81.4 437.0,79.9 443.1,81.8 451.5,80.0 457.1,79.9 461.7,81.5 466.9,80.9 473.6,80.1 481.9,80.0 489.7,80.0 496.2,80.2 501.9,81.8 510.6,80.4 519.8,80.2 526.2,81.6 534.0,79.9 543.7,80.2 549.4,81.4 555.4,80.4 560.0,79.9 567.5,80.2 575.1,80.5 581.8,81.8 588.7,81.0 597.8,80.1 602.8,81.7 611.6,80.2 616.9,81.3 626.3,80.1 635.8,81.6 643.4,80.6 648.2,79.8 657.8,80.2 665.9,80.3 674.8,81.0 680.6,80.1 688.8,79.9 694.3,80.9 703.3,81.1 709.1,81.7 714.4,79.7 720.1,80.7 724.6,80.1 730.9,81.0 735.8,80.5 745.0,81.9 752.9,81.2 760.4,80.0 764.8,79.7 774.1,81.2 783.7,79.7 791.4,80.8 799.7,80.4 809.5,79.9 816.8,81.3 826.0,81.3 834.2,81.4 843.5,80.5 851.5,81.7 860.6,80.6 869.2,81.6 876.6,81.1 883.0,81.0 890.6,79.9 898.4,81.9 907.5,81.3 913.9,81.3 921.3,80.7 930.2,79.9 938.6,79.8 946.2,80.8 947.0,80.8" fill="none" stroke="#3434b4" stroke-width="1.25" stroke-linejoin="round"/>
<polyline points="26.0,89.0 31.0,80.0 60.0,80.0 64.0,80.4 74.7,80.7 86.9,80.6 99.0,79.4 107.7,81.0 117.8,80.9 124.0,80.1 131.2,80.3 140.7,79.3 147.7,79.8 159.7,80.7 166.2,80.7 172.6,80.4 178.9,79.3 190.6,79.7 197.6,81.1 209.2,79.8 221.6,80.3 231.8,79.7 244.0,80.5 256.4,80.9 263.9,80.0 270.5,79.6 276.4,79.8 286.1,79.3 296.4,79.9 304.0,80.8 312.9,79.9 321.8,80.6 327.6,81.1 333.1,80.6 344.6,79.3 355.7,80.0 365.3,79.3 371.0,79.6 383.3,79.7 394.1,81.0 406.3,79.9 414.3,80.2 425.2,79.5 436.0,80.7 447.6,79.4 459.8,79.5 467.7,80.4 479.7,79.9 491.8,80.3 499.4,79.9 506.1,79.4 512.6,80.5 525.1,79.6 530.9,81.1 540.1,80.0 547.2,80.4 558.6,80.1 567.0,79.4 579.0,79.4 588.0,80.8 594.3,80.6 606.5,80.4 617.6,79.5 626.1,79.6 637.6,79.8 646.3,81.1 657.8,81.1 666.5,80.2 677.1,80.2 684.6,80.0 691.1,80.0 703.6,81.0 713.5,80.2 721.4,79.5 728.7,80.7 740.4,80.0 751.4,80.7 761.8,80.5 772.7,80.0 783.2,79.8 792.1,80.7 802.4,79.8 814.6,80.5 824.2,79.3 833.6,79.8 843.8,80.1 855.1,80.5 866.2,79.9 876.3,80.6 887.6,79.9 899.1,80.9 909.5,81.1 921.7,80.2 930.9,79.6 942.4,81.0 945.0,80.2" fill="none" stroke="#c060a8" stroke-width="0.8" stroke-dasharray="2.2 0.8" opacity="0.8"/>
<path d="M24 89.5H947" stroke="#e27866" stroke-width="1.9" opacity="0.85"/>
<path d="M230 89v-2h5v2M261 89v-2h5v2M284 89v-2h4v2M302 89v-2h6v2M316 89v-2h5v2M347 89v-2h5v2M378 89v-2h4v2M401 89v-2h6v2M432 89v-2h6v2M446 89v-2h6v2M473 89v-2h4v2M500 89v-2h6v2M527 89v-2h4v2M545 89v-2h4v2M559 89v-2h4v2M577 89v-2h6v2M608 89v-2h4v2M635 89v-2h6v2M649 89v-2h5v2M667 89v-2h6v2M685 89v-2h6v2M712 89v-2h4v2M735 89v-2h4v2M762 89v-2h5v2M785 89v-2h4v2M803 89v-2h6v2M817 89v-2h5v2M831 89v-2h5v2M858 89v-2h4v2M872 89v-2h4v2M899 89v-2h6v2M913 89v-2h6v2M927 89v-2h4v2" stroke="#e8b0a8" stroke-width="0.6" fill="none"/>
<path d="M24 90V69.5" stroke="#f0b0b0" stroke-width="0.8" fill="none"/>
<rect x="25.5" y="71.5" width="7" height="5.5" rx="1" stroke="#e04040" stroke-width="0.7" fill="none"/>
<circle cx="36.2" cy="74.3" r="3.3" fill="#e42424"/>
<circle cx="36.2" cy="74.3" r="1" fill="#f8b0b0"/>
<path d="M40.6 68V113.8M45.6 68V113.8" stroke="#151515" stroke-width="1.3"/>
<circle cx="45.6" cy="80.5" r="3.3" fill="#22c434"/>
<path d="M231 160.2l2 -2l2 2" stroke="#555" stroke-width="0.9" fill="none"/>
<path d="M231 346l2 2l2 -2" stroke="#3a66c0" stroke-width="0.9" fill="none"/>
<path d="M4.5 355.5l-2 2l2 2" stroke="#555" stroke-width="0.8" fill="none"/>
<path d="M222 355.5l2 2l-2 2" stroke="#555" stroke-width="0.8" fill="none"/>
<rect x="2.4" y="141.6" width="237" height="213.4" stroke="#e25c5c" stroke-width="1.8" fill="none"/>
<path d="M465.5 396l2 -2l2 2" stroke="#555" stroke-width="0.9" fill="none"/>
<path d="M465.5 574.5l2 2l2 -2" stroke="#555" stroke-width="0.9" fill="none"/>
<path d="M51.5 407.1l1.8 1.6l-1.8 1.6z" fill="#333"/>
<path d="M51.5 417.4l1.8 1.6l-1.8 1.6z" fill="#333"/>
<path d="M51.5 427.7l1.8 1.6l-1.8 1.6z" fill="#333"/>
<path d="M51.5 438.0l1.8 1.6l-1.8 1.6z" fill="#333"/>
<path d="M51.5 448.3l1.8 1.6l-1.8 1.6z" fill="#333"/>
<path d="M51.5 458.6l1.8 1.6l-1.8 1.6z" fill="#333"/>
<path d="M51.5 469.0l1.8 1.6l-1.8 1.6z" fill="#333"/>
<path d="M51.5 489.6l1.8 1.6l-1.8 1.6z" fill="#333"/>
<path d="M51.5 499.9l1.8 1.6l-1.8 1.6z" fill="#333"/>
<path d="M51.5 510.2l1.8 1.6l-1.8 1.6z" fill="#333"/>
<path d="M51.5 520.5l1.8 1.6l-1.8 1.6z" fill="#333"/>
<path d="M51.5 530.8l1.8 1.6l-1.8 1.6z" fill="#333"/>
<path d="M51.5 541.1l1.8 1.6l-1.8 1.6z" fill="#333"/>
<path d="M51.5 551.4l1.8 1.6l-1.8 1.6z" fill="#333"/>
<path d="M51.5 561.8l1.8 1.6l-1.8 1.6z" fill="#333"/>
<path d="M51.5 572.1l1.8 1.6l-1.8 1.6z" fill="#333"/>
<rect x="42" y="400" width="118.5" height="180" stroke="#e05a5a" stroke-width="1.2" fill="none"/>
<path d="M588.3 398.2h3.4l-1.7 1.9z" fill="#303030"/>
<path d="M662.5 395v8M664 396.5h5M664 398.5h5M666 396v-1.5" stroke="#333" stroke-width="1" fill="none"/>
<path d="M943.8 415.5l2 -2l2 2" stroke="#555" stroke-width="0.8" fill="none"/>
<path d="M943.8 561l2 2l2 -2" stroke="#555" stroke-width="0.8" fill="none"/>
<path d="M8.2 38V32h3l0.8 1h3.6v1.3h-5.6l-1.8 3.7z M10.6 34.9h6.6l-1.8 3.1h-6.6z" fill="#303030"/>
<path d="M32 38.1A3.9 3.9 0 1 1 33.85 35.3" stroke="#303030" stroke-width="1" fill="none"/>
<path d="M32.2 35.2h3.2l-1.6 2.2z" fill="#303030"/>
<path d="M31.2 36.3h3.2v-3z" fill="#303030" opacity="0.0"/>
<path d="M40.1 34.2h4.2l-2.1 2.4z" fill="#303030"/>
<path d="M50.7 31.3h7.8v7h-2.2v-2.8h-1v2.8h-0.9v-2.8h-1v2.8h-2.7z" fill="#303030"/>
<path d="M52.3 31.3h4.4v2.2h-4.4z" fill="#f3f3f3" opacity="0.35"/>
<path d="M64.9 34.2h4.2l-2.1 2.4z" fill="#303030"/>
<path d="M75.2 31.2l7.6 7.2M82.8 31.2l-7.6 7.2" stroke="#303030" stroke-width="1.1" fill="none"/>
<path d="M89 28v13" stroke="#e0e0e0" stroke-width="0.8"/>
<path d="M103.00 34.70L104.60 34.70M102.18 36.68L103.31 37.81M100.20 37.50L100.20 39.10M98.22 36.68L97.09 37.81M97.40 34.70L95.80 34.70M98.22 32.72L97.09 31.59M100.20 31.90L100.20 30.30M102.18 32.72L103.31 31.59" stroke="#303030" stroke-width="1.7"/>
<circle cx="100.2" cy="34.7" r="2.7" stroke="#303030" stroke-width="1.6" fill="#f3f3f3"/>
<path d="M1.5 27v15" stroke="#c8c8c8" stroke-width="0.8" stroke-dasharray="0.8 0.8"/>
<path d="M113 27v15" stroke="#c8c8c8" stroke-width="0.8" stroke-dasharray="0.8 0.8"/>
<path d="M120.8 38V31.8h3l0.8 1h3.8v1.4h-5.6l-1.6 3.8z M123.2 35h6.8l-1.6 3h-6.8z" fill="#303030"/>
<path d="M125 35.6h2.6l-1.2 2" stroke="#f3f3f3" stroke-width="0.6" fill="none"/>
<path d="M146.3 36.3A3.9 3.9 0 1 1 146 33" stroke="#303030" stroke-width="1" fill="none"/>
<circle cx="143" cy="34.8" r="1.2" fill="#303030"/>
<path d="M143 34.8h3.4" stroke="#303030" stroke-width="0.9"/>
<path d="M153.4 34.2h4.2l-2.1 2.4z" fill="#303030"/>
<rect x="165.9" y="31.2" width="2.4" height="4.8" rx="1.2" fill="#303030"/>
<path d="M164.8 34.5a2.3 2.3 0 0 0 4.6 0M167.1 36.8v1.6" stroke="#303030" stroke-width="0.7" fill="none"/>
<path d="M177.6 34.2h4.2l-2.1 2.4z" fill="#303030"/>
<path d="M189.5 32v6M191.8 32v6M194.1 32v6" stroke="#a8a8a8" stroke-width="1.1"/>
<path d="M188.8 34h6" stroke="#c8c8c8" stroke-width="0.6"/>
<path d="M202.3 27v15" stroke="#c4c4c4" stroke-width="0.8"/>
<path d="M205.2 27v15" stroke="#dcdcdc" stroke-width="0.8"/>
<path d="M213 31.8v6.5h8" stroke="#303030" stroke-width="1" fill="none"/>
<path d="M215 38v-4.2h1.3V38z M216.9 38v-3h1.3v3z M218.8 38v-3.8h1.3V38z" fill="#303030"/>
<path d="M226.7 34.2h4.2l-2.1 2.4z" fill="#303030"/>
<path d="M251.4 34.2h4.2l-2.1 2.4z" fill="#303030"/>
<circle cx="265.8" cy="34.8" r="3.9" stroke="#303030" stroke-width="1" fill="none"/>
<path d="M263.6 32.6l2.2 2.4l2.2-2.4M265.8 35v3" stroke="#303030" stroke-width="0.8" fill="none"/>
<path d="M275.9 34.2h4.2l-2.1 2.4z" fill="#303030"/>
<rect x="288.4" y="32.6" width="4.6" height="4.6" fill="#303030"/>
<path d="M288.4 32.8l-1-1.6M293 32.8l1-1.6M287 38.3h7.4M288.6 37l-1.2 1.3M292.8 37l1.2 1.3" stroke="#303030" stroke-width="0.8" fill="none"/>
<rect x="289.6" y="33.8" width="2.2" height="2.2" fill="#f3f3f3" opacity="0.6"/>
<path d="M300.6 27v15" stroke="#e4e4e4" stroke-width="0.8"/>
<path d="M339.5 34.2h4.2l-2.1 2.4z" fill="#303030"/>
<path d="M347 27v15" stroke="#c4c4c4" stroke-width="0.8"/>
<rect x="357.3" y="31.2" width="8.2" height="7.8" fill="#f3f3f3" stroke="#303030" stroke-width="1"/>
<path d="M361.4 31.2v7.8M357.3 35.1h8.2" stroke="#303030" stroke-width="0.9"/>
<rect x="357.3" y="31.2" width="4.1" height="3.9" fill="#303030" opacity="0.75"/>
<path d="M371.4 34.2h4.2l-2.1 2.4z" fill="#303030"/>
<rect x="381" y="31.2" width="8.2" height="7.8" fill="#f3f3f3" stroke="#303030" stroke-width="1"/>
<path d="M382.6 37l2-2.2h1.6l1.8-1.8" stroke="#303030" stroke-width="0.9" fill="none"/>
<path d="M395.9 34.2h4.2l-2.1 2.4z" fill="#303030"/>
<rect x="405.3" y="31.2" width="8.2" height="7.8" fill="#303030"/>
<path d="M406.6 34h2.6v1.4h-2.6zM406.6 36.4h2.6v1.4h-2.6zM410.3 34h2v1.4h-2zM410.3 36.4h2v1.4h-2z" fill="#f3f3f3"/>
<path d="M420.4 34.2h4.2l-2.1 2.4z" fill="#303030"/>
<rect x="430.3" y="31.2" width="8.2" height="7.8" fill="#c0dcf3" stroke="#2c3c4c" stroke-width="1.1"/>
<path d="M432 37.4v-3.2l2 2.4l2-4v4.8" stroke="#2c3c4c" stroke-width="0.8" fill="none"/>
<path d="M444.9 34.2h4.2l-2.1 2.4z" fill="#303030"/>
<rect x="455" y="31.2" width="8" height="7.8" fill="#3a4046"/>
<path d="M456.5 32.8h2v4.6h-2zM459.6 32.8h2v4.6h-2z" fill="#c0dcf3" opacity="0.8"/>
<rect x="472.2" y="31.2" width="8.2" height="7.8" fill="#444"/>
<path d="M473.4 32.4h2.4v2.2h-2.4zM476.8 32.4h2.4v2.2h-2.4zM473.4 35.6h2.4v2.2h-2.4zM476.8 35.6h2.4v2.2h-2.4z" fill="#e8e8e8" opacity="0.8"/>
<path d="M486.9 34.2h4.2l-2.1 2.4z" fill="#303030"/>
<rect x="497.8" y="31.2" width="8" height="7.8" fill="#c0dcf3" stroke="#2c3c4c" stroke-width="1.1"/>
<path d="M499.8 36.8h4v-2.4h-2.4" stroke="#2c3c4c" stroke-width="0.9" fill="none"/>
<path d="M511.7 34.2h4.2l-2.1 2.4z" fill="#303030"/>
<path d="M520.6 27v15" stroke="#c8c8c8" stroke-width="0.8" stroke-dasharray="0.8 0.8"/>
<path d="M530.3 32v6h1.2v-6zM535.6 32v6l-3.8-3z" fill="#303030"/>
<path d="M551 32v6l-4-3zM551.8 32v6h1.2v-6z" fill="#303030" />
<path d="M567 31.8v6.4l3.8-3.2z" fill="#303030"/>
<path d="M583.8 32v6h1.2v-6z M585.4 32v6l3.6-3z" fill="#303030"/>
<path d="M600 32v6l3.6-3zM604.2 32v6h1.3v-6z" fill="#303030"/>
<path d="M613.8 27v15" stroke="#e4e4e4" stroke-width="0.8"/>
<path d="M622 32v6l3-3zM625 32v6l3.2-3z" fill="#303030"/>
<path d="M636 27v15" stroke="#e4e4e4" stroke-width="0.8"/>
<path d="M669.9 34.2h4.2l-2.1 2.4z" fill="#303030"/>
<circle cx="685.6" cy="33.6" r="2" stroke="#303030" stroke-width="1.1" fill="none"/>
<path d="M684.2 35.2l-3 3" stroke="#303030" stroke-width="1.5"/>
<path d="M695 27v15" stroke="#c8c8c8" stroke-width="0.8" stroke-dasharray="0.8 0.8"/>
<path d="M701 27v15" stroke="#c8c8c8" stroke-width="0.8" stroke-dasharray="0.8 0.8"/>
<rect x="1057.6" y="31.6" width="6.6" height="4.6" rx="1.2" stroke="#303030" stroke-width="1.3" fill="none"/>
<path d="M1059 36.2v1.8l1.8-1.8z" fill="#303030"/>
<path d="M1071.5 33.7h4.2l-2.1 2.4z" fill="#303030"/>
<path d="M994.9 66.1h4.2l-2.1 2.4z" fill="#303030"/>
<path d="M1018.9 66.1h4.2l-2.1 2.4z" fill="#303030"/>
<path d="M1026.5 60v14" stroke="#dcdcdc" stroke-width="0.8"/>
<rect x="1033" y="63" width="7.4" height="7.8" fill="#f3f3f3" stroke="#303030" stroke-width="1"/>
<path d="M1033 65.6h7.4M1033 68.2h7.4M1036 63v7.8" stroke="#303030" stroke-width="0.8"/>
<path d="M1047.2 66.1h4.2l-2.1 2.4z" fill="#303030"/>
<rect x="1058.3" y="62.8" width="8" height="8.2" fill="none" stroke="#2c3c4c" stroke-width="1"/>
<path d="M1071.9 66.1h4.2l-2.1 2.4z" fill="#303030"/>
<path d="M956 59v16" stroke="#c8c8c8" stroke-width="0.8" stroke-dasharray="0.8 0.8"/>
<path d="M935.5 50.5h3v3h-3z M936.5 50.5v-1.2h3.2v3.2h-1.2" stroke="#222" stroke-width="0.8" fill="none"/>
<path d="M942 49.5l4 4M946 49.5l-4 4" stroke="#222" stroke-width="0.9" fill="none"/>
<path d="M226.5 145.5h3v3h-3z M227.5 145.5v-1.2h3.2v3.2h-1.2" stroke="#222" stroke-width="0.8" fill="none"/>
<path d="M233 144.5l4 4M237 144.5l-4 4" stroke="#222" stroke-width="0.9" fill="none"/>
<path d="M458.5 381.5h3v3h-3z M459.5 381.5v-1.2h3.2v3.2h-1.2" stroke="#222" stroke-width="0.8" fill="none"/>
<path d="M465 380.5l4 4M469 380.5l-4 4" stroke="#222" stroke-width="0.9" fill="none"/>
<path d="M935.5 381.5h3v3h-3z M936.5 381.5v-1.2h3.2v3.2h-1.2" stroke="#222" stroke-width="0.8" fill="none"/>
<path d="M942 380.5l4 4M946 380.5l-4 4" stroke="#222" stroke-width="0.9" fill="none"/>
<path d="M1078.5 50.5h3v3h-3z" stroke="#222" stroke-width="0.8" fill="none"/>
<path d="M1078.5 183h3v3h-3z" stroke="#222" stroke-width="0.8" fill="none"/>
<ellipse cx="871" cy="540" rx="8.5" ry="7.5" fill="#fff" stroke="#b0b0b0" stroke-width="0.8"/>
<ellipse cx="880" cy="547" rx="7" ry="6" fill="#fff" stroke="#b0b0b0" stroke-width="0.8"/>
<circle cx="868" cy="537.5" r="1" fill="#b0b0b0"/><circle cx="874" cy="537.5" r="1" fill="#b0b0b0"/></svg>
</div>
</body>
</html>
